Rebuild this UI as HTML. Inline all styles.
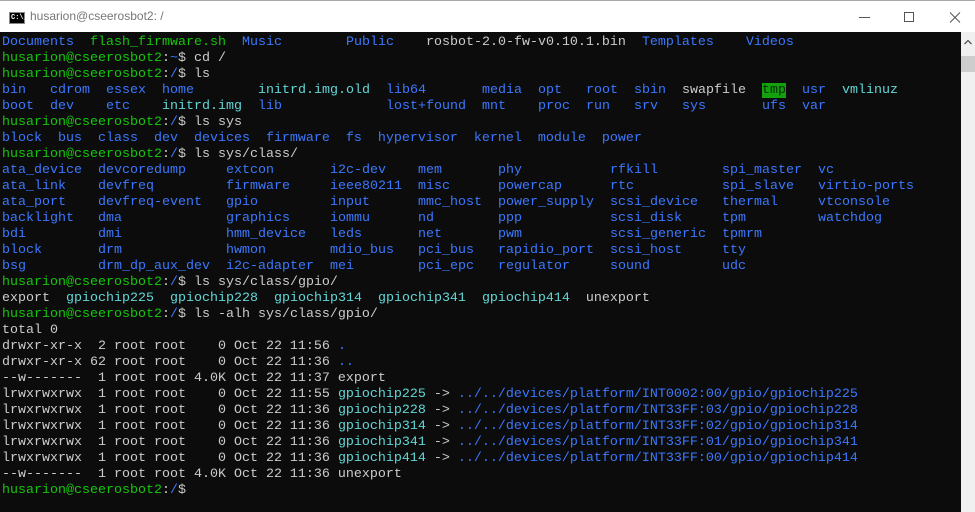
<!DOCTYPE html>
<html><head><meta charset="utf-8"><style>
*{margin:0;padding:0;box-sizing:border-box}
body{width:975px;height:512px;overflow:hidden;background:#0c0c0c;position:relative;font-family:"Liberation Sans",sans-serif}
#title{position:absolute;left:0;top:0;width:975px;height:32px;background:#fff;border-top:1px solid #aaa}
#title .t{position:absolute;left:30px;top:8px;font-size:12px;color:#777}
#icon{position:absolute;left:9px;top:11px;width:16px;height:12px;background:#000;border:1px solid #888}
#icon span{position:absolute;left:1px;top:0;font-size:7px;color:#fff;font-weight:bold;font-family:"Liberation Mono",monospace;line-height:10px}
#term{position:absolute;left:2px;top:35px;font-family:"Liberation Mono",monospace;font-size:13.33px;line-height:16px;color:#cccccc;white-space:pre}
#sb{position:absolute;left:961px;top:32px;width:14px;height:480px;background:#f0f0f0}
.g{color:#16c60c}.b{color:#3b78ff}.c{color:#61d6d6}.w{color:#cccccc}
.tmp{background:#13a10e;color:#0c2a0c}
i{font-style:normal;display:inline-block}
</style></head><body>
<div id="title"><div id="icon"><span>C:\_</span></div><div class="t">husarion@cseerosbot2: /</div>
<svg style="position:absolute;left:855px;top:9px" width="110" height="16"><line x1="4" y1="7.5" x2="15" y2="7.5" stroke="#555" stroke-width="1"/><rect x="49.5" y="2.5" width="9" height="9" fill="none" stroke="#555"/><path d="M95 2.5 L105 12.5 M105 2.5 L95 12.5" stroke="#555"/></svg>
</div>
<div id="sb"><svg width="14" height="40"><path d="M3.5 12 L7 8.5 L10.5 12" stroke="#555" stroke-width="1.3" fill="none"/><rect x="0" y="24" width="14" height="16" fill="#cdcdcd"/></svg></div>
<div id="term"><span class="b">Documents</span>  <span class="g">flash_firmware.sh</span>  <span class="b">Music</span>        <span class="b">Public</span>    <span class="w">rosbot-2.0-fw-v0.10.1.bin</span>  <span class="b">Templates</span>    <span class="b">Videos</span>
<span class="g">husarion@cseerosbot2</span>:<span class="b">~</span>$ cd /
<span class="g">husarion@cseerosbot2</span>:<span class="b">/</span>$ ls
<span class="b"><i style="width:48px">bin</i><i style="width:56px">cdrom</i><i style="width:56px">essex</i><i style="width:96px">home</i></span><span class="c"><i style="width:128px">initrd.img.old</i></span><span class="b"><i style="width:96px">lib64</i><i style="width:56px">media</i><i style="width:48px">opt</i><i style="width:48px">root</i><i style="width:48px">sbin</i></span><span class="w"><i style="width:80px">swapfile</i></span><i style="width:40px"><span class="tmp">tmp</span></i><span class="b"><i style="width:40px">usr</i></span><span class="c">vmlinuz</span>
<span class="b"><i style="width:48px">boot</i><i style="width:56px">dev</i><i style="width:56px">etc</i></span><span class="c"><i style="width:96px">initrd.img</i></span><span class="b"><i style="width:128px">lib</i><i style="width:96px">lost+found</i><i style="width:56px">mnt</i><i style="width:48px">proc</i><i style="width:48px">run</i><i style="width:48px">srv</i><i style="width:80px">sys</i><i style="width:40px">ufs</i><i style="width:40px">var</i></span>
<span class="g">husarion@cseerosbot2</span>:<span class="b">/</span>$ ls sys
<span class="b">block  bus  class  dev  devices  firmware  fs  hypervisor  kernel  module  power</span>
<span class="g">husarion@cseerosbot2</span>:<span class="b">/</span>$ ls sys/class/
<span class="b"><i style="width:96px">ata_device</i><i style="width:128px">devcoredump</i><i style="width:104px">extcon</i><i style="width:88px">i2c-dev</i><i style="width:80px">mem</i><i style="width:112px">phy</i><i style="width:112px">rfkill</i><i style="width:96px">spi_master</i>vc</span>
<span class="b"><i style="width:96px">ata_link</i><i style="width:128px">devfreq</i><i style="width:104px">firmware</i><i style="width:88px">ieee80211</i><i style="width:80px">misc</i><i style="width:112px">powercap</i><i style="width:112px">rtc</i><i style="width:96px">spi_slave</i>virtio-ports</span>
<span class="b"><i style="width:96px">ata_port</i><i style="width:128px">devfreq-event</i><i style="width:104px">gpio</i><i style="width:88px">input</i><i style="width:80px">mmc_host</i><i style="width:112px">power_supply</i><i style="width:112px">scsi_device</i><i style="width:96px">thermal</i>vtconsole</span>
<span class="b"><i style="width:96px">backlight</i><i style="width:128px">dma</i><i style="width:104px">graphics</i><i style="width:88px">iommu</i><i style="width:80px">nd</i><i style="width:112px">ppp</i><i style="width:112px">scsi_disk</i><i style="width:96px">tpm</i>watchdog</span>
<span class="b"><i style="width:96px">bdi</i><i style="width:128px">dmi</i><i style="width:104px">hmm_device</i><i style="width:88px">leds</i><i style="width:80px">net</i><i style="width:112px">pwm</i><i style="width:112px">scsi_generic</i><i style="width:96px">tpmrm</i></span>
<span class="b"><i style="width:96px">block</i><i style="width:128px">drm</i><i style="width:104px">hwmon</i><i style="width:88px">mdio_bus</i><i style="width:80px">pci_bus</i><i style="width:112px">rapidio_port</i><i style="width:112px">scsi_host</i><i style="width:96px">tty</i></span>
<span class="b"><i style="width:96px">bsg</i><i style="width:128px">drm_dp_aux_dev</i><i style="width:104px">i2c-adapter</i><i style="width:88px">mei</i><i style="width:80px">pci_epc</i><i style="width:112px">regulator</i><i style="width:112px">sound</i><i style="width:96px">udc</i></span>
<span class="g">husarion@cseerosbot2</span>:<span class="b">/</span>$ ls sys/class/gpio/
export  <span class="c">gpiochip225</span>  <span class="c">gpiochip228</span>  <span class="c">gpiochip314</span>  <span class="c">gpiochip341</span>  <span class="c">gpiochip414</span>  unexport
<span class="g">husarion@cseerosbot2</span>:<span class="b">/</span>$ ls -alh sys/class/gpio/
total 0
drwxr-xr-x  2 root root    0 Oct 22 11:56 <span class="b">.</span>
drwxr-xr-x 62 root root    0 Oct 22 11:36 <span class="b">..</span>
--w-------  1 root root 4.0K Oct 22 11:37 export
lrwxrwxrwx  1 root root    0 Oct 22 11:55 <span class="c">gpiochip225</span> -&gt; <span class="b">../../devices/platform/INT0002:00/gpio/gpiochip225</span>
lrwxrwxrwx  1 root root    0 Oct 22 11:36 <span class="c">gpiochip228</span> -&gt; <span class="b">../../devices/platform/INT33FF:03/gpio/gpiochip228</span>
lrwxrwxrwx  1 root root    0 Oct 22 11:36 <span class="c">gpiochip314</span> -&gt; <span class="b">../../devices/platform/INT33FF:02/gpio/gpiochip314</span>
lrwxrwxrwx  1 root root    0 Oct 22 11:36 <span class="c">gpiochip341</span> -&gt; <span class="b">../../devices/platform/INT33FF:01/gpio/gpiochip341</span>
lrwxrwxrwx  1 root root    0 Oct 22 11:36 <span class="c">gpiochip414</span> -&gt; <span class="b">../../devices/platform/INT33FF:00/gpio/gpiochip414</span>
--w-------  1 root root 4.0K Oct 22 11:36 unexport
<span class="g">husarion@cseerosbot2</span>:<span class="b">/</span>$</div>
</body></html>
